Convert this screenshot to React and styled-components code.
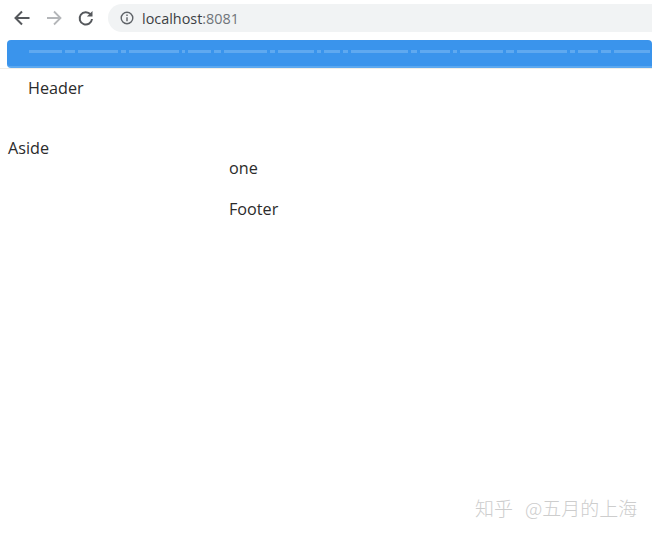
import React from 'react';
import styled, { createGlobalStyle } from 'styled-components';

const GlobalStyle = createGlobalStyle`
  html, body {
    margin: 0;
    padding: 0;
    background: #fff;
    overflow: hidden;
  }
`

const Page = styled.div`
  position: relative;
  width: 652px;
  height: 535px;
  overflow: hidden;
  font-family: "Open Sans", "Noto Sans", sans-serif;
  color: #2b2b2b;
`

const Toolbar = styled.div`
  display: flex;
  align-items: center;
  height: 36px;
  padding: 0 0 0 12px;
  box-sizing: border-box;
`

const NavButton = styled.div`
  display: flex;
  width: 20px;
  height: 20px;
  margin-right: 12px;
  color: ${props => props.disabled ? '#b4b6b9' : '#55585c'};
`

const UrlBar = styled.div`
  flex: 1;
  display: flex;
  align-items: center;
  gap: 8px;
  height: 28px;
  padding-left: 12px;
  background: #f1f3f4;
  border-radius: 14px 0 0 14px;
  font-size: 14.4px;
  color: #3c4043;
`

const Port = styled.span`
  margin-left: -8px;
  color: #70757a;
`

const BlueBar = styled.div`
  display: flex;
  align-items: center;
  gap: 3px;
  height: 28px;
  margin: 4px 0 0 7px;
  padding: 0 2px 4px 22px;
  box-sizing: border-box;
  background: #3a94ec;
  border-radius: 4px 4px 0 4px;
  border-bottom: 2px solid #5ba8f0;
`

const Smudge = styled.div`
  flex: ${props => props.grow};
  height: 3px;
  background: #5fa9f0;
  filter: blur(0.7px);
`

const Divider = styled.div`
  height: 1px;
  background: #f1ede6;
`

const Header = styled.div`
  height: 67px;
  padding: 7px 0 0 28px;
  box-sizing: border-box;
  font-size: 16.2px;
  line-height: 24px;
`

const Body = styled.div`
  display: grid;
  grid-template-columns: 221px 1fr;
  padding-left: 8px;
`

const Aside = styled.div`
  font-size: 16.2px;
  line-height: 24px;
`

const Main = styled.div`
  display: flex;
  flex-direction: column;
  gap: 17px;
  padding-top: 20px;
  font-size: 16.2px;
  line-height: 24px;
`

const Line = styled.div``

const Watermark = styled.div`
  position: absolute;
  left: 475px;
  top: 494px;
  display: flex;
  gap: 12px;
  font-family: "Noto Sans CJK SC", sans-serif;
  font-size: 19px;
  font-weight: 300;
  line-height: 28px;
  white-space: nowrap;
  color: #cdcdcd;
`

const smudges = [20, 6, 24, 3, 30, 2, 14, 4, 26, 3, 22, 2, 10, 3, 34, 4, 18, 2, 26, 5, 30, 3, 12, 6, 22];

function BackIcon() {
  return (
    <svg width="20" height="20" viewBox="0 0 20 20" fill="none" stroke="currentColor" strokeWidth="2">
      <path d="M17.5 10H4M10 3.5L3.5 10l6.5 6.5" />
    </svg>
  );
}

function ForwardIcon() {
  return (
    <svg width="20" height="20" viewBox="0 0 20 20" fill="none" stroke="currentColor" strokeWidth="1.8">
      <path d="M3 10h13M10 3.5l6.5 6.5-6.5 6.5" />
    </svg>
  );
}

function ReloadIcon() {
  return (
    <svg width="20" height="20" viewBox="0 0 20 20" fill="none">
      <path d="M14.6 6.4A6.2 6.2 0 1 0 16 11" stroke="currentColor" strokeWidth="2" />
      <path d="M16.5 3v5.6h-5.6z" fill="currentColor" />
    </svg>
  );
}

function InfoIcon() {
  return (
    <svg width="14" height="14" viewBox="0 0 14 14" fill="none" stroke="#5f6368" strokeWidth="1.4">
      <circle cx="7" cy="7" r="5.8" />
      <path d="M7 6.2v4M7 3.6v1.5" />
    </svg>
  );
}

export default function App() {
  return (
    <Page>
      <GlobalStyle />
      <Toolbar>
        <NavButton><BackIcon /></NavButton>
        <NavButton disabled><ForwardIcon /></NavButton>
        <NavButton><ReloadIcon /></NavButton>
        <UrlBar>
          <InfoIcon />
          <span>localhost</span>
          <Port>:8081</Port>
        </UrlBar>
      </Toolbar>
      <BlueBar>
        {smudges.map((grow, i) => <Smudge key={i} grow={grow} />)}
      </BlueBar>
      <Divider />
      <Header>Header</Header>
      <Body>
        <Aside>Aside</Aside>
        <Main>
          <Line>one</Line>
          <Line>Footer</Line>
        </Main>
      </Body>
      <Watermark>
        <span>知乎</span>
        <span>@五月的上海</span>
      </Watermark>
    </Page>
  );
}
